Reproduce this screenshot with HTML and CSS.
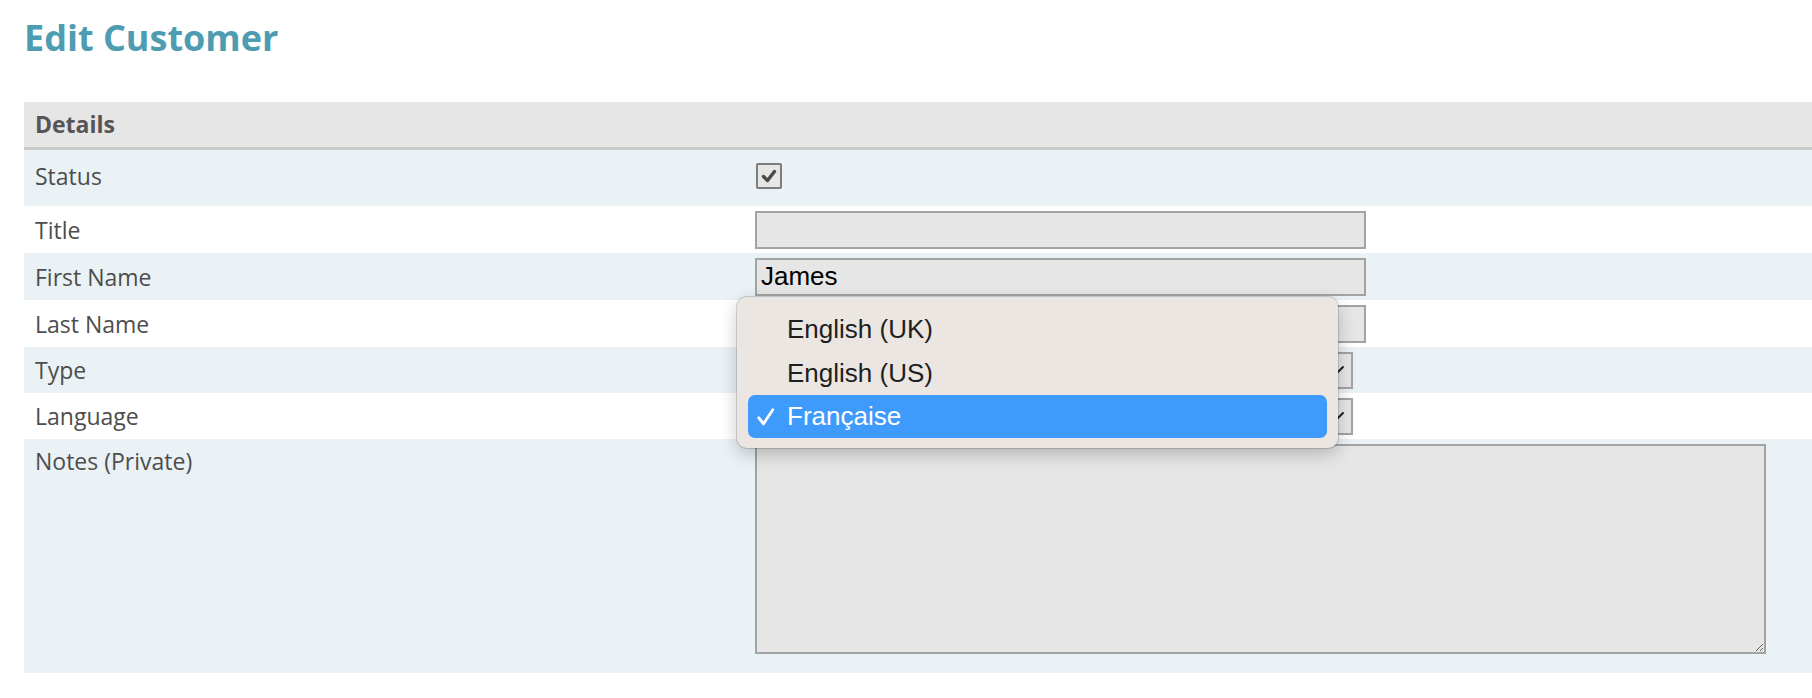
FILE: index.html
```html
<!DOCTYPE html>
<html lang="en">
<head>
<meta charset="utf-8">
<title>Edit Customer</title>
<link rel="stylesheet" href="styles.css">
</head>
<body>
<h1 class="page-title">Edit Customer</h1>
<div class="panel">
  <div class="panel-head">Details</div>

  <div class="row row-alt row-status">
    <div class="label">Status</div>
    <div class="field">
      <span class="checkbox">
        <svg width="22" height="22" viewBox="0 0 22 22"><path d="M5.5 11.5 L9.5 15.5 L16.5 6.5" fill="none" stroke="#4a4a4a" stroke-width="3.4" stroke-linecap="round" stroke-linejoin="round"/></svg>
      </span>
    </div>
  </div>

  <div class="row">
    <div class="label">Title</div>
    <div class="field"><input class="text-input" type="text" value=""></div>
  </div>

  <div class="row row-alt">
    <div class="label">First Name</div>
    <div class="field"><input class="text-input" type="text" value="James"></div>
  </div>

  <div class="row">
    <div class="label">Last Name</div>
    <div class="field"><input class="text-input" type="text" value=""></div>
  </div>

  <div class="row row-alt row-select">
    <div class="label">Type</div>
    <div class="field">
      <div class="select">
        <span class="select-value"></span>
        <svg class="chevron" width="16" height="10" viewBox="0 0 16 10"><path d="M2 2 L8 8 L14 2" fill="none" stroke="#222" stroke-width="2" stroke-linecap="round" stroke-linejoin="round"/></svg>
      </div>
    </div>
  </div>

  <div class="row row-select">
    <div class="label">Language</div>
    <div class="field">
      <div class="select select-open">
        <span class="select-value"></span>
        <svg class="chevron" width="16" height="10" viewBox="0 0 16 10"><path d="M2 2 L8 8 L14 2" fill="none" stroke="#222" stroke-width="2" stroke-linecap="round" stroke-linejoin="round"/></svg>
        <div class="menu">
          <div class="menu-item">English (UK)</div>
          <div class="menu-item">English (US)</div>
          <div class="menu-item menu-item-active">
            <svg class="menu-check" width="18" height="18" viewBox="0 0 18 18"><path d="M1.8 9.8 L6.5 15.8 L15.8 1.8" fill="none" stroke="#fff" stroke-width="2.8" stroke-linecap="round" stroke-linejoin="round"/></svg>
            Française
          </div>
        </div>
      </div>
    </div>
  </div>

  <div class="row row-alt row-notes">
    <div class="label">Notes (Private)</div>
    <div class="field"><textarea class="notes"></textarea></div>
  </div>
</div>
</body>
</html>
```

FILE: styles.css
```css
html, body {
  margin: 0;
  padding: 0;
  background: #ffffff;
}

body {
  padding-left: 24px;
  font-family: "Open Sans", "Liberation Sans", sans-serif;
  color: #505050;
  overflow: hidden;
}

.page-title {
  margin: 13px 0 40px;
  font-family: "Open Sans", sans-serif;
  font-weight: 700;
  font-size: 36px;
  line-height: 49px;
  color: #4e9cb2;
}

.panel {
  display: flex;
  flex-direction: column;
}

.panel-head {
  height: 45px;
  line-height: 45px;
  background: #e6e6e6;
  border-bottom: 3px solid #c9c9c9;
  padding-left: 11px;
  font-weight: 700;
  font-size: 23px;
  color: #555555;
}

.row {
  display: grid;
  grid-template-columns: 731px 1fr;
  align-items: center;
  height: 47px;
  background: #ffffff;
}

.row-alt {
  background: #eaf2f6;
}

.row-status {
  height: 56px;
  box-sizing: border-box;
  padding-bottom: 4px;
}

.row-select {
  height: 46px;
}

.row-notes {
  height: 234px;
  box-sizing: border-box;
  align-items: start;
  padding-top: 5px;
}

.row-notes .label {
  margin-top: 1px;
}

.label {
  padding-left: 11px;
  font-size: 23px;
  line-height: 32px;
  color: #4d4d4d;
}

.field {
  display: flex;
  align-items: center;
}

.checkbox {
  width: 26px;
  height: 26px;
  box-sizing: border-box;
  border: 2px solid #7d7d7d;
  border-radius: 2px;
  background: #e6e6e6;
  display: flex;
  align-items: center;
  justify-content: center;
  margin-left: 1px;
}

.text-input {
  width: 611px;
  height: 38px;
  box-sizing: border-box;
  border: 2px solid #a3a3a3;
  border-radius: 0;
  background: #e6e6e6;
  padding: 0 4px;
  margin: 0;
  font-family: "Liberation Sans", Arial, sans-serif;
  font-size: 26px;
  color: #000000;
  outline: none;
}

.select {
  position: relative;
  width: 598px;
  height: 37px;
  box-sizing: border-box;
  border: 2px solid #a3a3a3;
  background: #e6e6e6;
  display: flex;
  align-items: center;
  justify-content: space-between;
  padding: 0 6px 0 4px;
  font-family: "Liberation Sans", Arial, sans-serif;
  font-size: 24px;
  color: #000000;
}

.chevron {
  flex: none;
}

.menu {
  position: absolute;
  left: -20px;
  top: -103px;
  width: 601px;
  height: 151px;
  box-sizing: border-box;
  padding: 10px 11px 9px;
  background: #ebe6e2;
  border-radius: 10px;
  box-shadow: 0 0 0 1px rgba(0, 0, 0, 0.14), 0 6px 18px rgba(0, 0, 0, 0.22);
  display: flex;
  flex-direction: column;
  font-family: "Liberation Sans", Arial, sans-serif;
  font-size: 26px;
  color: #1e1e1e;
  z-index: 10;
}

.menu-item {
  position: relative;
  height: 44px;
  line-height: 44px;
  padding-left: 39px;
  border-radius: 7px;
}

.menu-item-active {
  background: #3e9bfc;
  color: #ffffff;
  height: 43px;
  line-height: 43px;
}

.menu-check {
  position: absolute;
  left: 9px;
  top: 13px;
}

.notes {
  display: block;
  width: 1011px;
  height: 210px;
  box-sizing: border-box;
  border: 2px solid #a3a3a3;
  border-radius: 0;
  background: #e6e6e6;
  margin: 0;
  padding: 4px;
  resize: both;
  outline: none;
  font-family: "Liberation Sans", Arial, sans-serif;
  font-size: 20px;
}
```
